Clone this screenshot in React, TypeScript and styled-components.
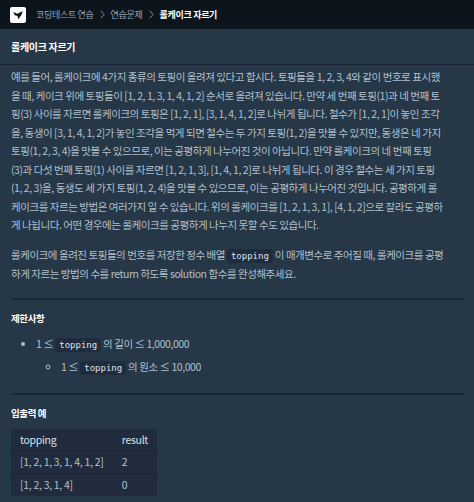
import styled, { createGlobalStyle } from "styled-components";

const GlobalStyle = createGlobalStyle`
  html, body {
    margin: 0;
    padding: 0;
    background: #263747;
  }
  body {
    font-family: "Noto Sans CJK KR", "Noto Sans", sans-serif;
    -webkit-font-smoothing: antialiased;
  }
  * {
    box-sizing: border-box;
  }
`;

const firstParagraph = [
  "예를 들어, 롤케이크에 4가지 종류의 토핑이 올려져 있다고 합시다. 토핑들을 1, 2, 3, 4와 같이 번호로 표시했",
  "을 때, 케이크 위에 토핑들이 [1, 2, 1, 3, 1, 4, 1, 2] 순서로 올려져 있습니다. 만약 세 번째 토핑(1)과 네 번째 토",
  "핑(3) 사이를 자르면 롤케이크의 토핑은 [1, 2, 1], [3, 1, 4, 1, 2]로 나뉘게 됩니다. 철수가 [1, 2, 1]이 놓인 조각",
  "을, 동생이 [3, 1, 4, 1, 2]가 놓인 조각을 먹게 되면 철수는 두 가지 토핑(1, 2)을 맛볼 수 있지만, 동생은 네 가지",
  "토핑(1, 2, 3, 4)을 맛볼 수 있으므로, 이는 공평하게 나누어진 것이 아닙니다. 만약 롤케이크의 네 번째 토핑",
  "(3)과 다섯 번째 토핑(1) 사이를 자르면 [1, 2, 1, 3], [1, 4, 1, 2]로 나뉘게 됩니다. 이 경우 철수는 세 가지 토핑",
  "(1, 2, 3)을, 동생도 세 가지 토핑(1, 2, 4)을 맛볼 수 있으므로, 이는 공평하게 나누어진 것입니다. 공평하게 롤",
  "케이크를 자르는 방법은 여러가지 일 수 있습니다. 위의 롤케이크를 [1, 2, 1, 3, 1], [4, 1, 2]으로 잘라도 공평하",
  "게 나뉩니다. 어떤 경우에는 롤케이크를 공평하게 나누지 못할 수도 있습니다.",
];

const rows = [
  { topping: "[1, 2, 1, 3, 1, 4, 1, 2]", result: "2" },
  { topping: "[1, 2, 3, 1, 4]", result: "0" },
];

export default function App() {
  return (
    <Page>
      <GlobalStyle />
      <TopBar>
        <Logo>
          <svg width="12" height="12" viewBox="0 0 16 16">
            <path d="M1.5 4 L7 6.2 L14.5 2.5 L12.2 8.6 L8.2 13.8 L7.4 9.4 L3.8 8.2 Z" fill="#0c151c" />
          </svg>
        </Logo>
        <Crumbs>
          <Crumb>코딩테스트 연습</Crumb>
          <Chevron />
          <Crumb>연습문제</Crumb>
          <Chevron />
          <Crumb $current>롤케이크 자르기</Crumb>
        </Crumbs>
      </TopBar>

      <TitleBar>롤케이크 자르기</TitleBar>

      <Content>
        <Paragraph>
          {firstParagraph.map((line, i) => (
            <span key={i}>
              {line}
              {i < firstParagraph.length - 1 && <br />}
            </span>
          ))}
        </Paragraph>
        <Paragraph>
          롤케이크에 올려진 토핑들의 번호를 저장한 정수 배열 <Code>topping</Code> 이 매개변수로 주어질 때, 롤케이크를 공평
          <br />
          하게 자르는 방법의 수를 return 하도록 solution 함수를 완성해주세요.
        </Paragraph>

        <Divider />

        <Heading>제한사항</Heading>
        <List>
          <li>
            1 ≤ <Code>topping</Code> 의 길이 ≤ 1,000,000
            <SubList>
              <li>
                1 ≤ <Code>topping</Code> 의 원소 ≤ 10,000
              </li>
            </SubList>
          </li>
        </List>

        <Divider />

        <Heading>입출력 예</Heading>
        <Table>
          <thead>
            <tr>
              <HeadCell $wide>topping</HeadCell>
              <HeadCell>result</HeadCell>
            </tr>
          </thead>
          <tbody>
            {rows.map((r) => (
              <tr key={r.topping}>
                <Cell>{r.topping}</Cell>
                <Cell>{r.result}</Cell>
              </tr>
            ))}
          </tbody>
        </Table>
      </Content>
    </Page>
  );
}

function Chevron() {
  return (
    <ChevronIcon width="5" height="9" viewBox="0 0 5 9">
      <polyline points="0.8,0.8 4.2,4.5 0.8,8.2" fill="none" stroke="#7d8b99" strokeWidth="1" />
    </ChevronIcon>
  );
}

const Page = styled.div`
  width: 474px;
  min-height: 502px;
  background: #263747;
  display: flex;
  flex-direction: column;
`;

const TopBar = styled.header`
  height: 29px;
  background: #0c151c;
  display: flex;
  align-items: center;
  gap: 10px;
  padding: 0 10px;
`;

const Logo = styled.div`
  width: 16px;
  height: 16px;
  background: #ffffff;
  border-radius: 2px;
  display: flex;
  align-items: center;
  justify-content: center;
`;

const Crumbs = styled.nav`
  display: flex;
  align-items: center;
  gap: 6px;
  font-size: 9px;
  letter-spacing: -0.3px;
`;

const Crumb = styled.span<{ $current?: boolean }>`
  color: ${(p) => (p.$current ? "#ffffff" : "#98a8b9")};
  font-weight: ${(p) => (p.$current ? 700 : 400)};
`;

const ChevronIcon = styled.svg`
  display: block;
`;

const TitleBar = styled.div`
  height: 36px;
  border-bottom: 1px solid #172334;
  display: flex;
  align-items: center;
  padding: 0 11px;
  color: #ffffff;
  font-weight: 700;
  font-size: 10px;
  letter-spacing: -0.3px;
`;

const Content = styled.main`
  padding: 3px 9px 0 11px;
  color: #b2c0cc;
  font-size: 10.5px;
  letter-spacing: -0.45px;
`;

const Paragraph = styled.p`
  margin: 0 0 11px;
  line-height: 18.5px;
  white-space: nowrap;
`;

const Code = styled.code`
  font-family: "DejaVu Sans Mono", "Liberation Mono", monospace;
  font-size: 9px;
  letter-spacing: 0;
  color: #dbe3ea;
  background: #202b3d;
  padding: 2px 4px;
  border-radius: 3px;
`;

const Divider = styled.div`
  height: 2px;
  background: #1c2836;
  margin: 14px 0 9px;
`;

const Heading = styled.h5`
  margin: 0;
  color: #ffffff;
  font-size: 9.5px;
  font-weight: 700;
  line-height: 18px;
  letter-spacing: -0.4px;
`;

const List = styled.ul`
  margin: 6px 0 0;
  padding-left: 25px;
  list-style: disc;
  line-height: 21px;
`;

const SubList = styled.ul`
  margin: 0;
  padding-left: 25px;
  list-style: circle;
`;

const Table = styled.table`
  margin-top: 7px;
  width: 146px;
  border-collapse: collapse;
  background: #202b3d;
  font-size: 10.5px;
  letter-spacing: -0.3px;
`;

const HeadCell = styled.th<{ $wide?: boolean }>`
  width: ${(p) => (p.$wide ? "103px" : "auto")};
  height: 22px;
  padding: 0 9px;
  text-align: left;
  font-weight: 400;
  color: #dbe3ea;
  border-bottom: 1px solid #1a2432;
`;

const Cell = styled.td`
  height: 22.5px;
  padding: 0 9px;
  color: #b2c0cc;
  white-space: nowrap;
  border-bottom: 1px solid #1a2432;

  tr:last-child & {
    border-bottom: none;
  }
`;
